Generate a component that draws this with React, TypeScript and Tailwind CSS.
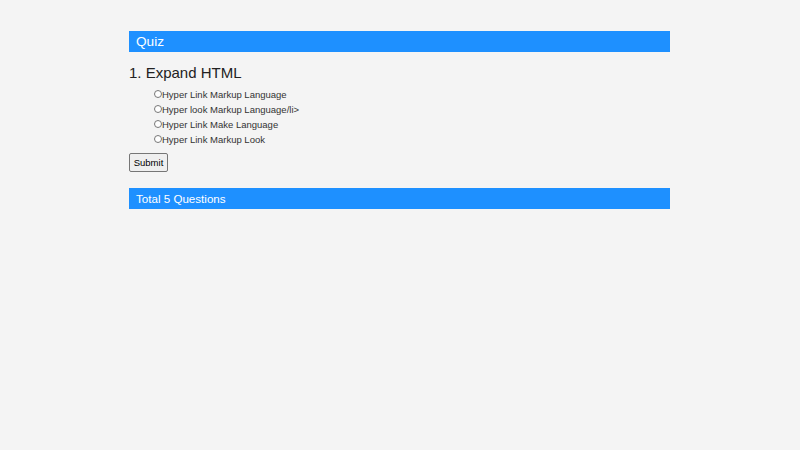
import React from "react";

const OPTIONS = [
  "Hyper Link Markup Language",
  "Hyper look Markup Language/li>",
  "Hyper Link Make Language",
  "Hyper Link Markup Look",
];

export default function App() {
  return (
    <div className="min-h-[450px] w-full bg-[#f4f4f4] font-['Liberation_Sans',Arial,sans-serif] text-[#222]">
      <div className="mx-auto w-[542px] pr-px pt-[31px]">
        <div className="h-[21px] bg-[#1e90ff] pl-[7px] text-[13.6px] leading-[21px] text-white">Quiz</div>
        <h2 className="mt-[11px] text-[15px] leading-[20px] text-[#222]">1. Expand HTML</h2>
        <ul className="mt-[4px] pl-[25px]">
          {OPTIONS.map((o) => (
            <li key={o} className="flex h-[15px] items-center text-[9.5px] leading-[15px] text-[#333]">
              <input type="radio" name="q1" className="m-0 h-[8px] w-[8px] -translate-y-[1px]" />
              <span>{o}</span>
            </li>
          ))}
        </ul>
        <button
          type="button"
          className="mt-[6px] h-[19px] w-[39px] rounded-[2px] border border-[#767676] bg-[#efefef] text-[9.5px] leading-[17px] text-black"
        >
          Submit
        </button>
        <div className="mt-[15px] h-[21px] bg-[#1e90ff] pl-[7px] text-[11.6px] leading-[21px] text-white">
          Total 5 Questions
        </div>
      </div>
    </div>
  );
}
